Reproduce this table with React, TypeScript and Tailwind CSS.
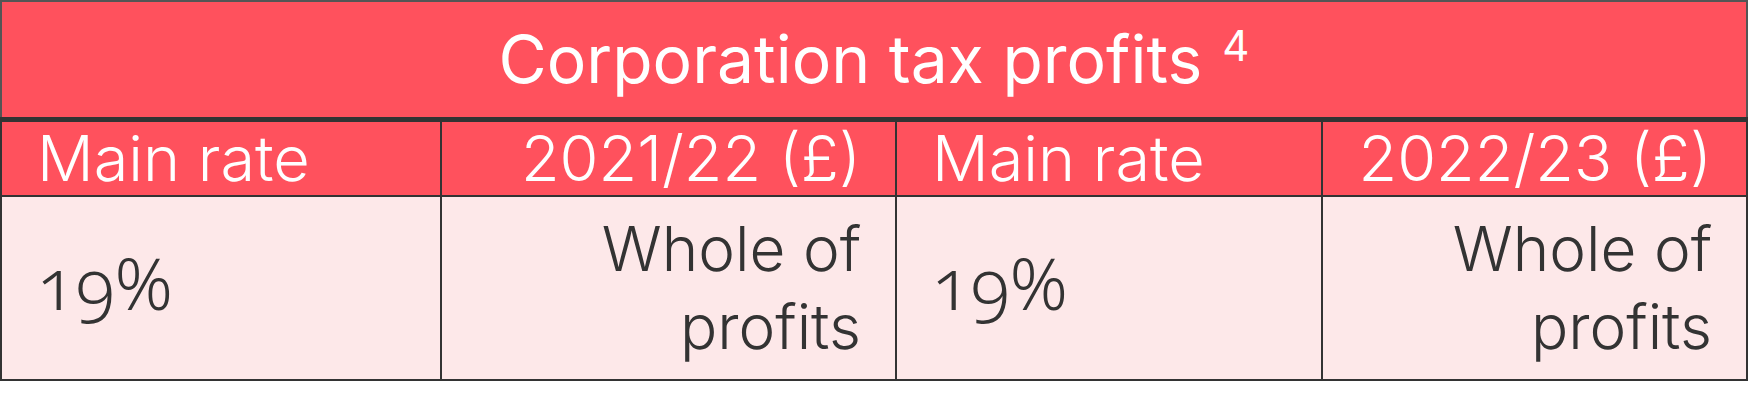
const rows = [
  { rate: "19%", year: "2021/22 (£)", band: ["Whole of", "profits"] },
  { rate: "19%", year: "2022/23 (£)", band: ["Whole of", "profits"] },
]

export default function App() {
  return (
    <div className="w-[1748px] bg-white font-['Inter',sans-serif]">
      <table className="w-full table-fixed border-collapse border-2 border-[#555]">
        <colgroup>
          <col className="w-[440px]" />
          <col className="w-[455px]" />
          <col className="w-[426px]" />
          <col />
        </colgroup>
        <thead>
          <tr>
            <th
              colSpan={4}
              className="h-[118px] border-b-[5px] border-[#333] bg-[#ff515d] p-0 text-center text-[66px] font-normal leading-none text-white"
            >
              Corporation tax profits
              <sup className="relative -top-[1px] ml-[20px] align-top text-[42px] font-normal leading-none">4</sup>
            </th>
          </tr>
          <tr className="h-[77px] bg-[#ff515d] text-[63px] leading-none font-light text-white">
            {rows.map((r) => [
              <th key={r.year + "a"} className="border-2 border-[#333] px-[35px] text-left font-light">
                Main rate
              </th>,
              <th key={r.year + "b"} className="border-2 border-[#333] px-[34px] text-right font-light">
                {r.year}
              </th>,
            ])}
          </tr>
        </thead>
        <tbody>
          <tr className="h-[184px] bg-[#fde8e9] text-[62px] font-light leading-[78px] text-[#333]">
            {rows.map((r) => [
              <td key={r.year + "a"} className="border-2 border-[#333] px-[35px] pb-[12px] text-left align-middle leading-none">
                <span className="oldstyle-nums font-['Noto_Sans',sans-serif] text-[72px] font-light">{r.rate}</span>
              </td>,
              <td key={r.year + "b"} className="border-2 border-[#333] px-[34px] text-right align-middle">
                {r.band[0]}
                <br />
                {r.band[1]}
              </td>,
            ])}
          </tr>
        </tbody>
      </table>
    </div>
  )
}
